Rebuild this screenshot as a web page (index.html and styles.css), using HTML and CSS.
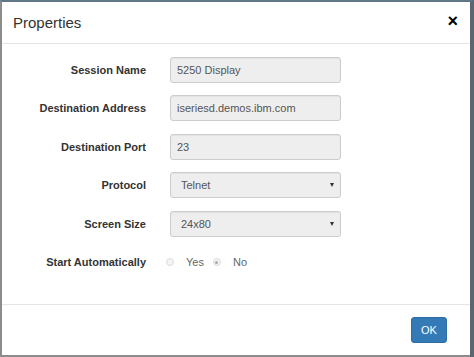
FILE: index.html
```html
<!DOCTYPE html>
<html lang="en">
<head>
  <meta charset="UTF-8">
  <meta name="viewport" content="width=device-width, initial-scale=1.0">
  <title>Properties</title>
  <link rel="stylesheet" href="styles.css">
</head>
<body>
  <div class="modal">
    <div class="modal-header">
      <h4 class="modal-title">Properties</h4>
      <button class="close" type="button">&times;</button>
    </div>

    <div class="modal-body">
      <form class="form-grid">
        <label>Session Name</label>
        <input class="form-control" type="text" value="5250 Display" disabled>

        <label>Destination Address</label>
        <input class="form-control" type="text" value="iseriesd.demos.ibm.com" disabled>

        <label>Destination Port</label>
        <input class="form-control" type="text" value="23" disabled>

        <label>Protocol</label>
        <div class="select-wrap">
          <select class="form-control" disabled>
            <option>Telnet</option>
          </select>
        </div>

        <label>Screen Size</label>
        <div class="select-wrap">
          <select class="form-control" disabled>
            <option>24x80</option>
          </select>
        </div>

        <label>Start Automatically</label>
        <div class="radios">
          <span class="radio"><span class="dot"></span>Yes</span>
          <span class="radio"><span class="dot checked"></span>No</span>
        </div>
      </form>
    </div>

    <div class="modal-footer">
      <button class="btn-primary" type="button">OK</button>
    </div>
  </div>
</body>
</html>
```

FILE: styles.css
```css
* {
  box-sizing: border-box;
  margin: 0;
  padding: 0;
}

body {
  font-family: "Liberation Sans", Arial, sans-serif;
  width: 474px;
  height: 357px;
  background-color: #8c8c8c;
  border-top: 2px solid #5f7887;
  border-left: 2px solid #8c8c8c;
  border-right: 4px solid #5a6670;
  overflow: hidden;
}

.modal {
  background: #fff;
  width: 468px;
  height: 353px;
  display: flex;
  flex-direction: column;
}

.modal-header {
  height: 42px;
  padding: 0 12px 0 11px;
  border-bottom: 1px solid #e5e5e5;
  display: flex;
  justify-content: space-between;
  align-items: center;
}

.modal-title {
  font-size: 15px;
  font-weight: normal;
  color: #333;
  margin-top: 1px;
}

.close {
  background: none;
  border: none;
  font-family: "Liberation Sans", Arial, sans-serif;
  font-size: 18px;
  font-weight: bold;
  line-height: 1;
  color: #000;
  margin-top: -2px;
}

.modal-body {
  padding: 13px 0 29px 0;
}

.form-grid {
  display: grid;
  grid-template-columns: 144px 171px;
  grid-auto-rows: 26px;
  column-gap: 24px;
  row-gap: 12.5px;
  align-items: center;
}

.form-grid label {
  text-align: right;
  font-size: 11px;
  font-weight: bold;
  color: #333;
}

.form-control {
  width: 171px;
  height: 26px;
  background: #eee;
  border: 1px solid #ccc;
  border-radius: 3px;
  padding: 0 6px;
  font-family: "Liberation Sans", Arial, sans-serif;
  font-size: 11px;
  color: #555;
  box-shadow: inset 0 1px 1px rgba(0,0,0,0.05);
  opacity: 1;
}

.select-wrap {
  position: relative;
  height: 26px;
}

.select-wrap select {
  appearance: none;
  -webkit-appearance: none;
  padding-left: 10px;
}

.select-wrap::after {
  content: "";
  position: absolute;
  right: 7px;
  top: 11px;
  border-left: 2px solid transparent;
  border-right: 2px solid transparent;
  border-top: 4px solid #333;
}

.radios {
  display: flex;
  align-items: center;
  gap: 9px;
  font-size: 11px;
  color: #666;
  margin-left: -4px;
}

.radio {
  display: flex;
  align-items: center;
  gap: 12px;
}

.dot {
  width: 8px;
  height: 8px;
  border: 1px solid #ddd;
  border-radius: 50%;
  background: #f4f4f4;
  display: flex;
  align-items: center;
  justify-content: center;
}

.dot.checked::after {
  content: "";
  width: 3px;
  height: 3px;
  border-radius: 50%;
  background: #aaa;
}

.modal-footer {
  border-top: 1px solid #e5e5e5;
  padding: 12px 23px 12px 0;
  display: flex;
  justify-content: flex-end;
}

.btn-primary {
  width: 36px;
  height: 26px;
  background: #337ab7;
  border: 1px solid #2e6da4;
  border-radius: 3px;
  color: #fff;
  font-family: "Liberation Sans", Arial, sans-serif;
  font-size: 11px;
}
```
